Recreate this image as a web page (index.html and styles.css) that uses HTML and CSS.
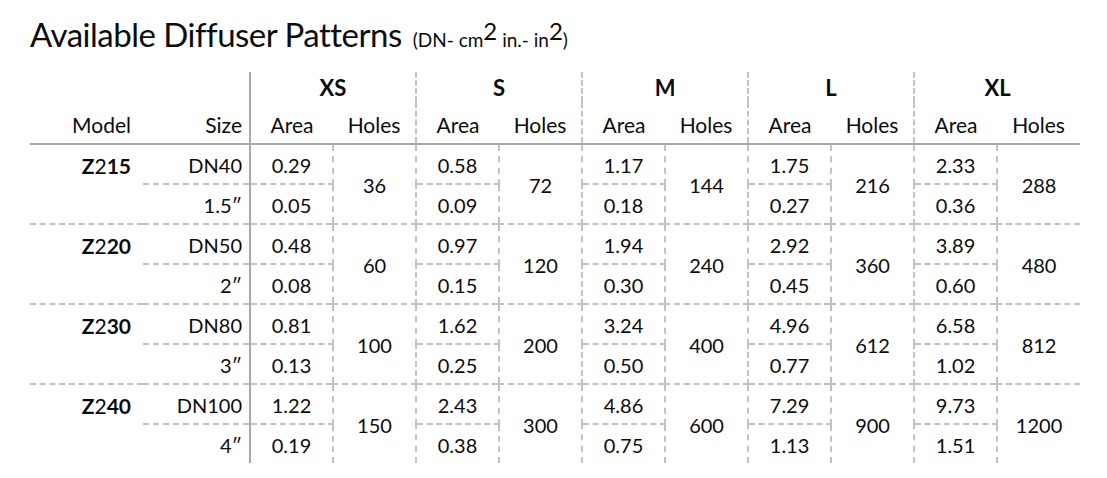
FILE: index.html
```html
<!DOCTYPE html>
<html lang="en">
<head>
<meta charset="utf-8">
<title>Available Diffuser Patterns</title>
<link rel="stylesheet" href="styles.css">
</head>
<body>
<div class="page">
  <h1 class="title">Available Diffuser Patterns <span class="units">(DN- cm<span class="sq">2</span> in.- in<span class="sq">2</span>)</span></h1>
  <table class="grid">
    <colgroup>
      <col class="c-model"><col class="c-size">
      <col class="c-val"><col class="c-val"><col class="c-val"><col class="c-val"><col class="c-val">
      <col class="c-val"><col class="c-val"><col class="c-val"><col class="c-val"><col class="c-val">
    </colgroup>
    <thead>
      <tr class="h1">
        <th colspan="2" class="blank"></th>
        <th colspan="2" class="grp">XS</th>
        <th colspan="2" class="grp">S</th>
        <th colspan="2" class="grp">M</th>
        <th colspan="2" class="grp">L</th>
        <th colspan="2" class="grp last">XL</th>
      </tr>
      <tr class="h2">
        <th class="model">Model</th>
        <th class="size">Size</th>
        <th>Area</th><th class="holes">Holes</th>
        <th>Area</th><th class="holes">Holes</th>
        <th>Area</th><th class="holes">Holes</th>
        <th>Area</th><th class="holes">Holes</th>
        <th>Area</th><th class="holes last">Holes</th>
      </tr>
    </thead>
    <tbody class="block">
      <tr class="top">
        <td class="model"><b>Z</b><span class="mid">2</span><b>15</b></td><td class="size">DN40</td>
        <td class="area">0.29</td><td class="holes" rowspan="2">36</td>
        <td class="area">0.58</td><td class="holes" rowspan="2">72</td>
        <td class="area">1.17</td><td class="holes" rowspan="2">144</td>
        <td class="area">1.75</td><td class="holes" rowspan="2">216</td>
        <td class="area">2.33</td><td class="holes last" rowspan="2">288</td>
      </tr>
      <tr class="bot">
        <td class="model"></td><td class="size">1.5″</td>
        <td class="area">0.05</td><td class="area">0.09</td><td class="area">0.18</td><td class="area">0.27</td><td class="area">0.36</td>
      </tr>
    </tbody>
    <tbody class="block">
      <tr class="top">
        <td class="model"><b>Z</b><span class="mid">2</span><b>20</b></td><td class="size">DN50</td>
        <td class="area">0.48</td><td class="holes" rowspan="2">60</td>
        <td class="area">0.97</td><td class="holes" rowspan="2">120</td>
        <td class="area">1.94</td><td class="holes" rowspan="2">240</td>
        <td class="area">2.92</td><td class="holes" rowspan="2">360</td>
        <td class="area">3.89</td><td class="holes last" rowspan="2">480</td>
      </tr>
      <tr class="bot">
        <td class="model"></td><td class="size">2″</td>
        <td class="area">0.08</td><td class="area">0.15</td><td class="area">0.30</td><td class="area">0.45</td><td class="area">0.60</td>
      </tr>
    </tbody>
    <tbody class="block">
      <tr class="top">
        <td class="model"><b>Z</b><span class="mid">2</span><b>30</b></td><td class="size">DN80</td>
        <td class="area">0.81</td><td class="holes" rowspan="2">100</td>
        <td class="area">1.62</td><td class="holes" rowspan="2">200</td>
        <td class="area">3.24</td><td class="holes" rowspan="2">400</td>
        <td class="area">4.96</td><td class="holes" rowspan="2">612</td>
        <td class="area">6.58</td><td class="holes last" rowspan="2">812</td>
      </tr>
      <tr class="bot">
        <td class="model"></td><td class="size">3″</td>
        <td class="area">0.13</td><td class="area">0.25</td><td class="area">0.50</td><td class="area">0.77</td><td class="area">1.02</td>
      </tr>
    </tbody>
    <tbody class="block final">
      <tr class="top">
        <td class="model"><b>Z</b><span class="mid">2</span><b>40</b></td><td class="size">DN100</td>
        <td class="area">1.22</td><td class="holes" rowspan="2">150</td>
        <td class="area">2.43</td><td class="holes" rowspan="2">300</td>
        <td class="area">4.86</td><td class="holes" rowspan="2">600</td>
        <td class="area">7.29</td><td class="holes" rowspan="2">900</td>
        <td class="area">9.73</td><td class="holes last" rowspan="2">1200</td>
      </tr>
      <tr class="bot">
        <td class="model"></td><td class="size">4″</td>
        <td class="area">0.19</td><td class="area">0.38</td><td class="area">0.75</td><td class="area">1.13</td><td class="area">1.51</td>
      </tr>
    </tbody>
  </table>
</div>
</body>
</html>
```
FILE: styles.css
```css
html, body {
  margin: 0;
  padding: 0;
  background: #ffffff;
}
body {
  font-family: "Lato", "Liberation Sans", sans-serif;
  color: #0c0c0c;
}
.page {
  padding: 14px 0 0 30px;
}
.title {
  margin: 0;
  font-weight: 400;
  font-size: 33px;
  line-height: 40px;
  letter-spacing: -0.5px;
  white-space: nowrap;
}
.units {
  display: inline-block;
  margin-left: 3px;
  font-size: 19px;
  letter-spacing: 0;
}
.units .sq {
  font-size: 24px;
  vertical-align: 7px;
  line-height: 0;
}
.grid {
  margin-top: 12px;
  border-collapse: collapse;
  table-layout: fixed;
  width: 1050px;
}
.c-model { width: 113px; }
.c-size { width: 107px; }
.c-val { width: 83px; }

.grid th, .grid td {
  padding: 0;
  text-align: center;
  white-space: nowrap;
}
.grid th {
  font-weight: 400;
}
.h1 th {
  height: 30px;
  font-size: 22px;
  font-weight: 700;
  vertical-align: middle;
}
.h1 .blank {
  border-right: 2px solid #a9a9a9;
}
.h1 .grp {
  border-right: 2px dashed #c2c2c2;
}
.h2 th {
  height: 38px;
  padding-top: 3px;
  font-size: 21px;
  border-bottom: 2px solid #a9a9a9;
  vertical-align: middle;
}
.h2 .holes {
  border-right: 2px dashed #c2c2c2;
}
.h2 .model, .grid td.model {
  text-align: right;
  padding-right: 12px;
}
.h2 .size, .grid td.size {
  text-align: right;
  padding-right: 7px;
  border-right: 2px solid #a9a9a9;
}
.grid td {
  height: 37px;
  font-size: 20px;
  padding-top: 1px;
}
.grid td.model {
  font-size: 21px;
}
.grid td.model b {
  font-weight: 700;
}
.grid td.model .mid {
  font-weight: 400;
}
.grid td.area {
  border-right: 2px dashed #c2c2c2;
}
.grid td.holes {
  border-right: 2px dashed #c2c2c2;
}
.grid .h1 .last, .grid .h2 .last, .grid td.holes.last {
  border-right: none;
}
.top td.size, .top td.area {
  border-bottom: 2px dashed #c2c2c2;
}
.bot td, .top td.holes {
  border-bottom: 2px dashed #c2c2c2;
}
.final .bot td, .final .top td.holes {
  border-bottom: none;
}
```
